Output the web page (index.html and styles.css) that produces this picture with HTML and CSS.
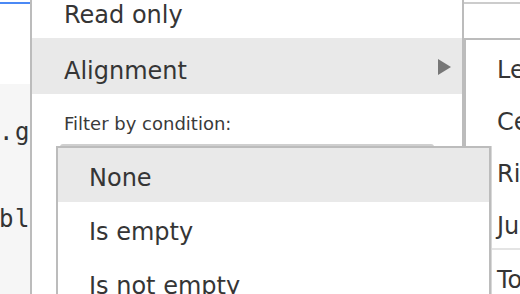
FILE: index.html
```html
<!DOCTYPE html>
<html>
<head>
<meta charset="utf-8">
<link rel="stylesheet" href="styles.css">
</head>
<body>
<div class="sheet">
  <div class="topline"><div class="topline-sel"></div></div>
  <div class="blank"></div>
  <div class="code-area">
    <div class="code-line">.g</div>
    <div class="code-line">bl</div>
  </div>
</div>

<div class="menu">
  <div class="menu-item">Read only</div>
  <div class="menu-item menu-item-active">
    <span>Alignment</span>
    <span class="arrow"></span>
  </div>
  <div class="filter-label">Filter by condition:</div>
  <div class="select-box"></div>
</div>

<div class="submenu">
  <div class="sub-item">Left</div>
  <div class="sub-item">Center</div>
  <div class="sub-item">Right</div>
  <div class="sub-item">Justify</div>
  <div class="sub-sep"></div>
  <div class="sub-item">Top</div>
</div>

<div class="dropdown">
  <div class="drop-item drop-item-active">None</div>
  <div class="drop-item">Is empty</div>
  <div class="drop-item">Is not empty</div>
</div>
</body>
</html>
```

FILE: styles.css
```css
html, body {
  margin: 0;
  padding: 0;
  width: 520px;
  height: 294px;
  overflow: hidden;
  background: #ffffff;
  font-family: "DejaVu Sans", Verdana, sans-serif;
  color: #353535;
}

.sheet {
  display: flex;
  flex-direction: column;
  height: 294px;
}

.topline {
  margin-top: 2px;
  height: 2px;
  background: #cccccc;
  display: flex;
}

.topline-sel {
  width: 30px;
  background: #4b89f5;
}

.blank {
  height: 80px;
}

.code-area {
  flex: 1;
  background: #f6f6f6;
  padding-top: 5px;
  font-family: "DejaVu Sans Mono", monospace;
  font-size: 24px;
  letter-spacing: 1.5px;
  color: #333333;
}

.code-line {
  line-height: 87px;
  height: 87px;
  margin-left: -1px;
  white-space: nowrap;
}

.menu {
  position: absolute;
  left: 30px;
  top: -18px;
  width: 434px;
  height: 400px;
  box-sizing: border-box;
  background: #ffffff;
  border-left: 2px solid #bcbcbc;
  border-right: 2px solid #bcbcbc;
  z-index: 1;
  display: flex;
  flex-direction: column;
}

.menu-item {
  height: 56px;
  box-sizing: border-box;
  padding: 21px 0 11px 32px;
  font-size: 24px;
  line-height: 24px;
  white-space: nowrap;
  display: flex;
  justify-content: space-between;
}

.menu-item-active {
  background: #e9e9e9;
}

.arrow {
  width: 0;
  height: 0;
  border-left: 13px solid #777777;
  border-top: 8px solid transparent;
  border-bottom: 8px solid transparent;
  margin-right: 11px;
  margin-top: 0;
}

.filter-label {
  padding: 19px 0 0 32px;
  font-size: 18px;
  line-height: 22px;
  color: #3a3a3a;
}

.select-box {
  margin: 9px 0 0 28px;
  width: 370px;
  height: 40px;
  border: 2px solid #cfcfcf;
  border-radius: 3px;
}

.submenu {
  position: absolute;
  left: 464px;
  top: 38px;
  width: 200px;
  height: 300px;
  background: #ffffff;
  border-left: 2px solid #bcbcbc;
  border-top: 2px solid #bcbcbc;
  z-index: 2;
  display: flex;
  flex-direction: column;
}

.sub-item {
  height: 52px;
  box-sizing: border-box;
  padding: 18px 0 10px 31px;
  font-size: 24px;
  line-height: 24px;
  white-space: nowrap;
}

.sub-sep {
  height: 2px;
  background: #e4e4e4;
}

.dropdown {
  position: absolute;
  left: 56px;
  top: 146px;
  width: 435px;
  height: 200px;
  box-sizing: border-box;
  background: #ffffff;
  border: 2px solid #bcbcbc;
  border-bottom: none;
  box-shadow: 1px 0 0 #d8d8d8;
  z-index: 3;
  display: flex;
  flex-direction: column;
}

.drop-item {
  height: 54px;
  box-sizing: border-box;
  padding: 18px 0 12px 31px;
  font-size: 24px;
  line-height: 24px;
  white-space: nowrap;
}

.drop-item-active {
  background: #e9e9e9;
}
```
